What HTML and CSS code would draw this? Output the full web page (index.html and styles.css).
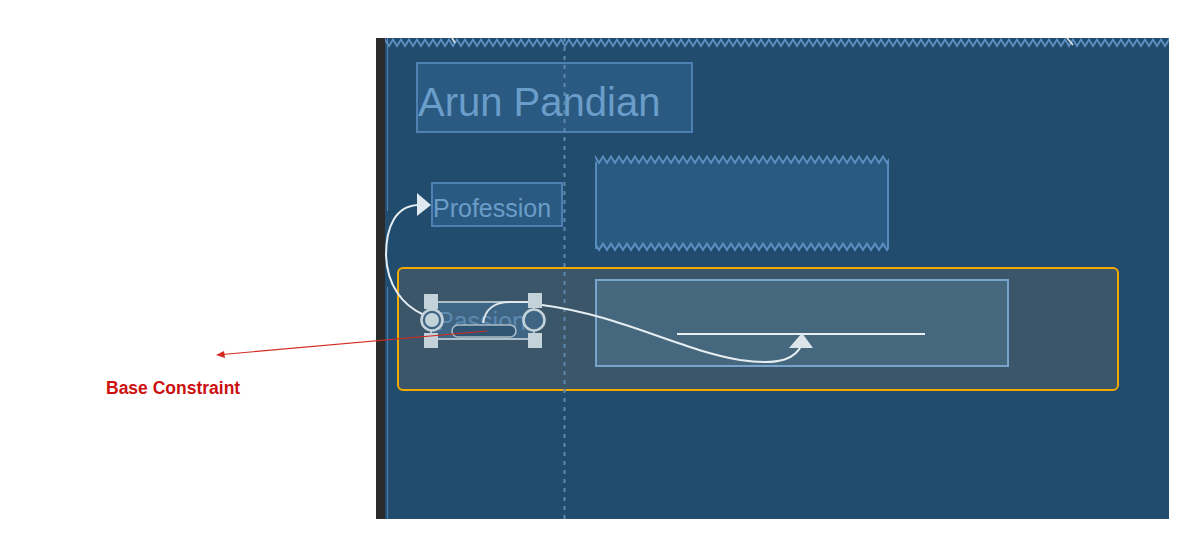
FILE: index.html
```html
<!DOCTYPE html>
<html>
<head>
<meta charset="utf-8">
<link rel="stylesheet" href="styles.css">
</head>
<body>
<div class="page">
  <aside class="note">
    <span class="note-label">Base Constraint</span>
  </aside>
  <section class="editor">
    <div class="strip"></div>
    <div class="panel">
      <div class="node name-box">Arun Pandian</div>
      <div class="node prof-box">Profession</div>
      <div class="node selection"></div>
      <div class="node inner-box"></div>
      <svg class="wires" viewBox="376 38 793 481" width="793" height="481">
        <defs>
          <pattern id="zzTop" x="385" y="38" width="8" height="10" patternUnits="userSpaceOnUse">
            <path d="M-4 8 L0 1.5 L4 8 L8 1.5 L12 8" fill="none" stroke="#5c90c2" stroke-width="1.8"/>
          </pattern>
          <pattern id="zzBoxT" x="595" y="155" width="8" height="10" patternUnits="userSpaceOnUse">
            <path d="M-4 8 L0 1.5 L4 8 L8 1.5 L12 8" fill="none" stroke="#5c90c2" stroke-width="1.8"/>
          </pattern>
          <pattern id="zzBoxB" x="595" y="242" width="8" height="10" patternUnits="userSpaceOnUse">
            <path d="M-4 8 L0 1.5 L4 8 L8 1.5 L12 8" fill="none" stroke="#5c90c2" stroke-width="1.8"/>
          </pattern>
        </defs>
        <!-- left edge highlights -->
        <line x1="387.5" y1="38" x2="387.5" y2="211" stroke="#4c7fab" stroke-width="1.2"/>
        <line x1="387.5" y1="287" x2="387.5" y2="519" stroke="#4c7fab" stroke-width="1.2"/>
        <!-- top zigzag edge -->
        <rect x="385" y="38" width="784" height="10" fill="url(#zzTop)"/>
        <line x1="452" y1="38" x2="455" y2="43" stroke="#dfe7ec" stroke-width="1.6"/>
        <line x1="1067" y1="38" x2="1073" y2="45" stroke="#dfe7ec" stroke-width="1.6"/>
        <!-- dashed guideline -->
        <line x1="564.5" y1="38" x2="564.5" y2="519" stroke="#5d87ab" stroke-width="2" stroke-dasharray="4 5"/>
        <!-- zigzag box -->
        <rect x="595" y="160" width="294" height="88" fill="#2a5a81"/>
        <rect x="595" y="155" width="294" height="10" fill="url(#zzBoxT)"/>
        <rect x="595" y="242" width="294" height="10" fill="url(#zzBoxB)"/>
        <line x1="596" y1="162" x2="596" y2="249" stroke="#5c90c2" stroke-width="1.8"/>
        <line x1="888" y1="162" x2="888" y2="249" stroke="#5c90c2" stroke-width="1.8"/>
        <!-- constraint to Profession -->
        <path d="M424 315 C402 305 387 285 386 255 C386 226 396 206 418 205" fill="none" stroke="#e6eef2" stroke-width="2"/>
        <polygon points="417,193 431,205 417,216" fill="#dfe9ef"/>
        <!-- baseline line and arrowhead -->
        <line x1="677" y1="334" x2="925" y2="334" stroke="#e8eef1" stroke-width="2.2"/>
        <path d="M542 305 C620 315 680 350 740 360 C782 366 796 358 802 344" fill="none" stroke="#e6eef2" stroke-width="2"/>
        <polygon points="789,348 813,348 802,333" fill="#dbe5ea"/>
        <!-- selected widget -->
        <rect x="431" y="302" width="103" height="37" fill="#3e6684" stroke="#aebfc9" stroke-width="2"/>
        <text x="437" y="330" class="passion">Passion</text>
        <rect x="452" y="325" width="64" height="12" rx="6" fill="#2f5572" stroke="#a9bcc7" stroke-width="1.6"/>
        <path d="M483 323 C485 309 495 302 510 302 L528 302" fill="none" stroke="#dfe8ed" stroke-width="2"/>
        <rect x="424" y="294" width="14" height="15" fill="#c4d2d9"/>
        <rect x="528" y="293" width="14" height="15" fill="#c4d2d9"/>
        <rect x="424" y="333" width="14" height="15" fill="#c4d2d9"/>
        <rect x="528" y="333" width="14" height="15" fill="#c4d2d9"/>
        <circle cx="432" cy="320" r="10.5" fill="#3e6684" stroke="#c4d2d9" stroke-width="2.6"/>
        <circle cx="432" cy="320" r="7" fill="#c4d2d9"/>
        <circle cx="534" cy="320" r="10.5" fill="#3e6684" stroke="#c4d2d9" stroke-width="2.6"/>
      </svg>
    </div>
  </section>
  <svg class="annot" viewBox="0 0 1200 541" width="1200" height="541">
    <line x1="487" y1="331" x2="222" y2="354.5" stroke="#d42a20" stroke-width="1.1"/>
    <polygon points="216,355 224,351 225,358" fill="#d42a20"/>
  </svg>
</div>
</body>
</html>
```

FILE: styles.css
```css
html, body {
  margin: 0;
  padding: 0;
  background: #ffffff;
  font-family: "Liberation Sans", Arial, sans-serif;
}

.page {
  position: relative;
  width: 1200px;
  height: 541px;
  display: flex;
  overflow: hidden;
}

.note {
  width: 376px;
  flex: none;
  padding: 377px 0 0 106px;
  box-sizing: border-box;
}

.note-label {
  display: block;
  color: #cc0f0f;
  font-weight: bold;
  font-size: 17.5px;
  line-height: 22px;
  white-space: nowrap;
}

.editor {
  margin-top: 38px;
  width: 793px;
  height: 481px;
  display: flex;
  flex: none;
}

.strip {
  width: 9px;
  flex: none;
  background: #2b2b2c;
}

.panel {
  position: relative;
  flex: 1;
  background: #224c6d;
}

.node {
  position: absolute;
  box-sizing: border-box;
}

.name-box {
  left: 31px;
  top: 24px;
  width: 277px;
  height: 71px;
  border: 2px solid #4e81b1;
  background: #2a5a81;
  color: #6b9dca;
  font-size: 40px;
  line-height: 46px;
  padding-top: 15px;
  white-space: nowrap;
}

.prof-box {
  left: 46px;
  top: 144px;
  width: 132px;
  height: 45px;
  border: 2px solid #4e81b1;
  background: #2a5a81;
  color: #6b9dca;
  font-size: 25px;
  line-height: 33px;
  padding-top: 8px;
  white-space: nowrap;
}

.selection {
  left: 12px;
  top: 229px;
  width: 722px;
  height: 124px;
  border: 2px solid #f2a900;
  border-radius: 6px;
  background: #3a5668;
}

.inner-box {
  left: 210px;
  top: 241px;
  width: 414px;
  height: 88px;
  border: 2px solid #77a5cd;
  background: #45687f;
}

.wires {
  position: absolute;
  left: -9px;
  top: 0;
  overflow: visible;
}

.passion {
  font-family: "Liberation Sans", Arial, sans-serif;
  font-size: 25px;
  fill: #5c89b0;
}

.annot {
  position: absolute;
  left: 0;
  top: 0;
  pointer-events: none;
}
```
